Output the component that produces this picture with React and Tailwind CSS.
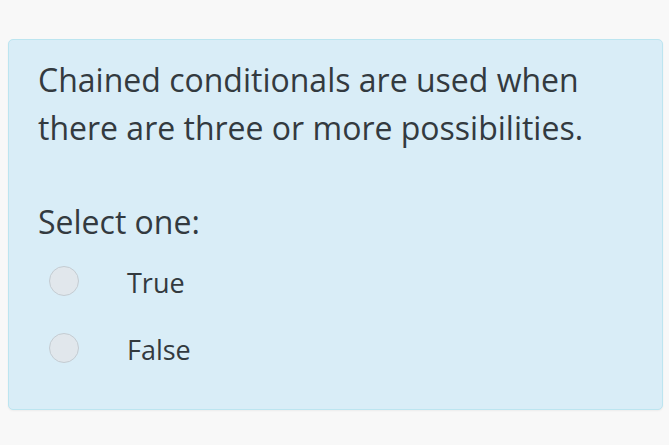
export default function App() {
  const options = ['True', 'False'];
  return (
    <div className="min-h-[445px] bg-[#f8f8f8] pt-[39px] px-[8px] font-['Open_Sans',sans-serif] text-[#333a3f]">
      <div className="w-[655px] h-[371px] rounded-[5px] border border-[#bce5f0] bg-[#d9edf7] pl-[29px] pt-[16px] shadow-[0_1px_2px_rgba(0,0,0,0.05)]">
        <p className="text-[32px] leading-[48px]">
          Chained conditionals are used when
          <br />
          there are three or more possibilities.
        </p>
        <p className="mt-[46px] text-[32px] leading-[48px]">Select one:</p>
        <div className="mt-[3px] flex flex-col">
          {options.map((o) => (
            <label key={o} className="flex items-center h-[67px]">
              <span className="ml-[11px] w-[30px] h-[30px] rounded-full border border-[#c4ccd2] bg-[#e1e7ec] relative -top-[2px]" />
              <span className="ml-[48px] text-[27px] relative top-[1px]">{o}</span>
            </label>
          ))}
        </div>
      </div>
    </div>
  );
}
